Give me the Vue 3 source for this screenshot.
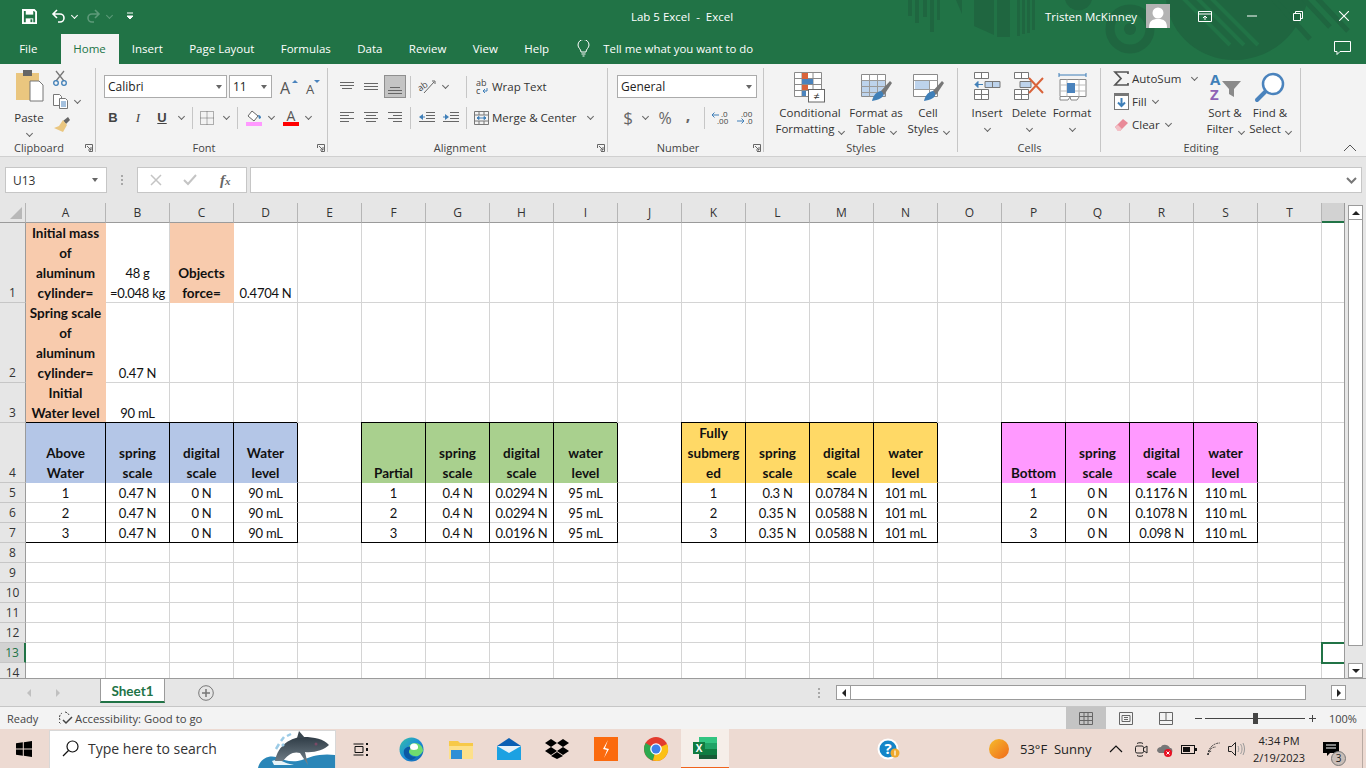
<template>
  <div class="app">
    <!-- Title bar -->
    <header class="titlebar">
      <svg class="title-art" width="500" height="64" viewBox="0 0 500 64">
        <g fill="#1f6640">
          <rect x="8" y="0" width="4" height="16" /><rect x="15" y="0" width="4" height="23" /><rect x="23" y="0" width="4" height="17" /><rect x="30" y="0" width="4" height="32" /><rect x="37" y="0" width="3" height="20" />
          <path d="M56 0h6v14zM74 0h20v35l-20-9zM97 0h13v37h-13zM117 0h3v36h-3zM122 0h3v34h-3zM127 0h3v33h-3zM132 0h3v30h-3z" />
          <path d="M165 0h27a14 14 0 0 1-27 0z" />
        </g>
        <circle cx="230" cy="29" r="20" fill="none" stroke="#1f6640" stroke-width="9" />
        <circle cx="230" cy="29" r="6" fill="#1f6640" />
        <path d="M266 0c4 38 38 62 72 60 28-2 58-18 70-60z" fill="#1f6640" />
        <g stroke="#217346" stroke-width="4"><path d="M280 -5l50 50M294 -5l50 50M308 -5l50 50" /></g>
        <g stroke="#1f6640" stroke-width="5"><path d="M400 -5l30 32M414 -5l34 36M370 -5l40 44" /></g>
      </svg>
      <div class="title-row">
        <div class="qat">
          <svg class="save" width="15" height="15" viewBox="0 0 16 16"><path d="M1 1h12l2 2v12H1z" fill="none" stroke="#fff" stroke-width="2" /><rect x="4" y="1" width="8" height="5" fill="#fff" /><rect x="4" y="10" width="8" height="5" fill="#fff" /><rect x="9" y="11" width="2" height="3" fill="#217346" /></svg>
          <svg class="undo" width="15" height="14" viewBox="0 0 15 14"><path d="M6 1L2 5l4 4M2 5h7a4 4 0 0 1 0 8H7" fill="none" stroke="#fff" stroke-width="1.6" /></svg>
          <span class="chev w"></span>
          <svg class="redo" width="15" height="14" viewBox="0 0 15 14"><path d="M9 1l4 4-4 4M13 5H6a4 4 0 0 0 0 8h2" fill="none" stroke="#5d9a79" stroke-width="1.6" /></svg>
          <span class="chev dim"></span>
          <svg class="custom" width="8" height="8" viewBox="0 0 8 8"><path d="M1 1h6M1 4h6l-3 3z" stroke="#fff" fill="#fff" /></svg>
        </div>
        <div class="doc-title">Lab 5 Excel&nbsp; -&nbsp; Excel</div>
        <div class="user">Tristen McKinney</div>
        <svg class="avatar" width="24" height="24" viewBox="0 0 24 24"><rect width="24" height="24" fill="#b3b3b3" /><circle cx="12" cy="9" r="5.5" fill="#fff" /><path d="M3 24c0-7 3-9 9-9s9 2 9 9z" fill="#fff" /></svg>
        <svg class="win-btn opts" width="14" height="11" viewBox="0 0 14 11"><path d="M.5.5h13v10H.5zM.5 3h13M7 9V5M5 7l2-2 2 2" fill="none" stroke="#fff" /></svg>
        <svg class="win-btn mini" width="10" height="2" viewBox="0 0 10 2"><path d="M0 1h10" stroke="#fff" /></svg>
        <svg class="win-btn rest" width="10" height="10" viewBox="0 0 10 10"><path d="M.5 2.500h7v7h-7zM2.500 2.500V.5h7v7h-2" fill="none" stroke="#fff" /></svg>
        <svg class="win-btn clos" width="10" height="10" viewBox="0 0 10 10"><path d="M0 0l10 10M10 0L0 10" stroke="#fff" stroke-width="1.1" /></svg>
      </div>
      <div class="tab-row">
        <span class="tab file">File</span>
        <span class="tab home">Home</span>
        <span v-for="t in tabs" :key="t" class="tab">{{ t }}</span>
        <svg class="bulb" width="13" height="17" viewBox="0 0 13 17"><path d="M4 12c0-3-3-4-3-7a5.500 5.500 0 0 1 11 0c0 3-3 4-3 7zM4.500 14h4M5.500 16h2" fill="none" stroke="#fff" /></svg>
        <span class="tell">Tell me what you want to do</span>
        <svg class="comment" width="17" height="15" viewBox="0 0 17 15"><path d="M.5.5h16v10H6l-3 3v-3H.5z" fill="none" stroke="#fff" /></svg>
      </div>
    </header>

    <!-- Ribbon -->
    <section class="ribbon">
      <div class="group g-clip">
        <div class="clip-body">
          <div class="big paste">
            <svg width="29" height="32" viewBox="0 0 29 32"><path d="M1 3h23v27H1z" fill="#eac67f" /><rect x="8" y="0" width="9" height="6" fill="#666" /><path d="M15 11h9l4 4v16H15z" fill="#fff" stroke="#777" /></svg>
            <span class="paste-label">Paste</span>
            <span class="chev"></span>
          </div>
          <div class="clip-tools">
            <svg width="14" height="16" viewBox="0 0 14 16"><path d="M3 1l8 10M11 1L3 11" stroke="#777" stroke-width="1.300" fill="none" /><circle cx="3" cy="13" r="2.300" fill="none" stroke="#3f7fb8" stroke-width="1.300" /><circle cx="11" cy="13" r="2.300" fill="none" stroke="#3f7fb8" stroke-width="1.300" /></svg>
            <div class="copy-row">
              <svg width="15" height="15" viewBox="0 0 15 15"><path d="M.5.5h6l2 2v9h-8z" fill="#fff" stroke="#777" /><path d="M6.500 4.500h6l2 2v8h-8z" fill="#fff" stroke="#777" /><path d="M8 8h5M8 10h5M8 12h5" stroke="#4a83bd" /></svg>
              <span class="chev"></span>
            </div>
            <svg width="17" height="15" viewBox="0 0 17 15"><path d="M10 4l5-4 2 3-4 4z" fill="#666" /><path d="M10 3l4 5-4 7-9-4 5-2z" fill="#eac67f" /></svg>
          </div>
        </div>
        <div class="g-label">Clipboard</div>
        <svg class="launch" width="8" height="8" viewBox="0 0 8 8"><path d="M.5 4V.5H7.500V7.500H4M2 2l4 4M3 6h3V3" fill="none" stroke="#666" /></svg>
      </div>

      <div class="group g-font">
        <div class="row r1">
          <div class="combo font-name"><span>Calibri</span><i class="caret"></i></div>
          <div class="combo font-size"><span>11</span><i class="caret"></i></div>
          <svg class="grow" width="18" height="16" viewBox="0 0 18 16"><text x="0" y="15" class="ic-a">A</text><path d="M12 4l3-3 3 3z" fill="#4a83bd" /></svg>
          <svg class="shrink" width="14" height="16" viewBox="0 0 14 16"><text x="0" y="15" class="ic-a sm">A</text><path d="M8 1h6l-3 3z" fill="#4a83bd" /></svg>
        </div>
        <div class="row r2">
          <span class="fmt bold-ic">B</span>
          <span class="fmt ital-ic">I</span>
          <span class="fmt und-ic">U</span>
          <span class="chev ml8"></span>
          <span class="sep sep-a"></span>
          <svg class="ml7" width="14" height="14" viewBox="0 0 14 14"><path d="M.5.5h13v13H.5zM7 .5v13M.5 7h13" fill="none" stroke="#666" stroke-dasharray="1 1" /></svg>
          <span class="chev ml10"></span>
          <span class="sep sep-a"></span>
          <div class="color-ic ml8">
            <svg width="16" height="12" viewBox="0 0 16 12"><path d="M6 1l6 5-4 5-6-5z" fill="#fff" stroke="#666" /><path d="M12 5c2 0 3 1 3 3l-2 1z" fill="#3f7fb8" /></svg>
            <i class="bar-pink"></i>
          </div>
          <span class="chev ml7"></span>
          <div class="color-ic ml9">
            <span class="a-red">A</span>
            <i class="bar-red"></i>
          </div>
          <span class="chev ml7"></span>
        </div>
        <div class="g-label with-launch">Font</div>
        <svg class="launch" width="8" height="8" viewBox="0 0 8 8"><path d="M.5 4V.5H7.500V7.500H4M2 2l4 4M3 6h3V3" fill="none" stroke="#666" /></svg>
      </div>

      <div class="group g-align">
        <div class="row r1">
          <svg class="al" width="14" height="9" viewBox="0 0 14 9"><path d="M0 .5h14M0 3.500h14M2 6.500h10" stroke="#666" /></svg>
          <svg class="al" width="14" height="8" viewBox="0 0 14 8"><path d="M0 .5h14M0 3.500h14M0 6.500h14" stroke="#666" /></svg>
          <div class="al-on"><svg width="14" height="9" viewBox="0 0 14 9"><path d="M2 1.500h10M0 4.500h14M0 7.500h14" stroke="#666" /></svg></div>
          <span class="sep sep-b"></span>
          <svg class="ml8" width="17" height="15" viewBox="0 0 17 15"><text x="0" y="10" class="ic-ab" transform="rotate(-35 5 10)">ab</text><path d="M5 14L15 3M13 2h3v3" stroke="#666" fill="none" /></svg>
          <span class="chev ml7"></span>
          <span class="sep sep-c"></span>
          <svg class="ml9" width="13" height="16" viewBox="0 0 13 16"><text x="0" y="7" class="ic-wr">ab</text><text x="0" y="15" class="ic-wr">c</text><path d="M7 12h4V9M7 12l2-2M7 12l2 2" fill="none" stroke="#3f7fb8" /></svg>
          <span class="lbl ml3">Wrap Text</span>
        </div>
        <div class="row r2">
          <svg class="al" width="14" height="11" viewBox="0 0 14 11"><path d="M0 .5h14M0 3.500h9M0 6.500h14M0 9.500h9" stroke="#666" /></svg>
          <svg class="al" width="14" height="11" viewBox="0 0 14 11"><path d="M0 .5h14M2 3.500h10M0 6.500h14M2 9.500h10" stroke="#666" /></svg>
          <svg class="al" width="14" height="11" viewBox="0 0 14 11"><path d="M0 .5h14M5 3.500h9M0 6.500h14M5 9.500h9" stroke="#666" /></svg>
          <span class="sep sep-d"></span>
          <svg class="ml8" width="16" height="12" viewBox="0 0 16 12"><path d="M7 .5h9M7 3.500h9M7 6.500h9M0 9.500h16" stroke="#666" /><path d="M0 5l4-3v6z" fill="#3f7fb8" /><path d="M2 5h4" stroke="#3f7fb8" /></svg>
          <svg class="ml8" width="16" height="12" viewBox="0 0 16 12"><path d="M7 .5h9M7 3.500h9M7 6.500h9M0 9.500h16" stroke="#666" /><path d="M6 5L2 2v6z" fill="#3f7fb8" /><path d="M0 5h3" stroke="#3f7fb8" /></svg>
          <span class="sep sep-e"></span>
          <svg class="ml7" width="15" height="14" viewBox="0 0 15 14"><path d="M.5.5h14v13H.5zM.5 4h14M.5 10h14M5 .5V4M10 .5V4M5 10v3.500M10 10v3.500" fill="none" stroke="#777" /><path d="M3 7h9M3 7l2-1.500v3zM12 7l-2-1.500v3z" stroke="#3f7fb8" fill="#3f7fb8" /></svg>
          <span class="lbl ml3">Merge &amp; Center</span>
          <span class="chev ml11"></span>
        </div>
        <div class="g-label with-launch">Alignment</div>
        <svg class="launch" width="8" height="8" viewBox="0 0 8 8"><path d="M.5 4V.5H7.500V7.500H4M2 2l4 4M3 6h3V3" fill="none" stroke="#666" /></svg>
      </div>

      <div class="group g-num">
        <div class="row r1"><div class="combo num-fmt"><span>General</span><i class="caret"></i></div></div>
        <div class="row r2">
          <span class="num-ic dollar">$</span>
          <span class="chev ml10"></span>
          <span class="num-ic pct">%</span>
          <span class="num-ic comma">,</span>
          <span class="sep sep-f"></span>
          <svg class="ml7" width="18" height="13" viewBox="0 0 18 13"><text x="9" y="6" class="ic-dec">.0</text><text x="5" y="13" class="ic-dec">.00</text><path d="M0 4h7M0 4l2.500-2.500M0 4l2.500 2.500" stroke="#3f7fb8" fill="none" /></svg>
          <svg class="ml7" width="18" height="13" viewBox="0 0 18 13"><text x="4" y="6" class="ic-dec">.00</text><text x="9" y="13" class="ic-dec">.0</text><path d="M0 10h7M7 10L4.500 7.500M7 10l-2.500 2.500" stroke="#3f7fb8" fill="none" /></svg>
        </div>
        <div class="g-label with-launch">Number</div>
        <svg class="launch" width="8" height="8" viewBox="0 0 8 8"><path d="M.5 4V.5H7.500V7.500H4M2 2l4 4M3 6h3V3" fill="none" stroke="#666" /></svg>
      </div>

      <div class="group g-styles">
        <div class="bigs">
          <div class="big st1">
            <svg width="32" height="31" viewBox="0 0 32 31"><path d="M.5.5h27v24H.5zM.5 6.500h27M.5 12.500h27M.5 18.500h27M8 .5v24M19 .5v24" fill="#fff" stroke="#8a8a8a" /><path d="M8 1h6v6H8zM8 13h6v5H8z" fill="#d9633a" /><path d="M8 7h11v5H8zM8 19h4v5H8z" fill="#4a83bd" /><rect x="14.500" y="17.500" width="16" height="12.500" fill="#fff" stroke="#666" /><text x="22.500" y="28" text-anchor="middle" class="ic-ne">≠</text></svg>
            <span class="txt">Conditional<br />Formatting <i class="chev in"></i></span>
          </div>
          <div class="big st2">
            <svg width="31" height="31" viewBox="0 0 31 31"><path d="M.5 2.500h24v22H.5z" fill="#fff" stroke="#8a8a8a" /><rect x="1" y="8" width="23" height="16" fill="#bdd3ec" /><path d="M.5 8.500h24M.5 14.500h24M.5 20.500h24M8.500 2.500v22M16.500 2.500v22" stroke="#9a9a9a" fill="none" /><path d="M19 20L29 9l2 2-8 12z" fill="#777" /><path d="M20 19c3 2 3 5 0 7-3 2-6 2-9 3 1-4 3-9 9-10z" fill="#3f7fb8" /></svg>
            <span class="txt">Format as<br />Table <i class="chev in"></i></span>
          </div>
          <div class="big st3">
            <svg width="31" height="31" viewBox="0 0 31 31"><path d="M.5 2.500h24v22H.5z" fill="#fff" stroke="#8a8a8a" /><rect x="2" y="8" width="14" height="9" fill="#bdd3ec" /><path d="M.5 8.500h24M.5 17.500h24M16.500 8.500v16" stroke="#9a9a9a" fill="none" /><path d="M19 20L29 9l2 2-8 12z" fill="#777" /><path d="M20 19c3 2 3 5 0 7-3 2-6 2-9 3 1-4 3-9 9-10z" fill="#3f7fb8" /></svg>
            <span class="txt">Cell<br />Styles <i class="chev in"></i></span>
          </div>
        </div>
        <div class="g-label">Styles</div>
      </div>

      <div class="group g-cells">
        <div class="bigs">
          <div class="big ce1">
            <svg class="h28" width="27" height="28" viewBox="0 0 27 28"><g fill="#fff" stroke="#777"><path d="M.5.500h14v6H.5zM7.500.5v6M.5 17.500h14v10H.5zM7.500 17.500v10M.5 22.500h14" /></g><path d="M11 9.500h15v6H11zM18.500 9.500v6" fill="#bdd3ec" stroke="#777" /><path d="M1 12.500h8M1 12.500l3-3v6z" stroke="#3f7fb8" fill="#3f7fb8" /></svg>
            <span class="txt">Insert</span><i class="chev"></i>
          </div>
          <div class="big ce2">
            <svg class="h28" width="30" height="28" viewBox="0 0 30 28"><g fill="#fff" stroke="#777"><path d="M.5.500h14v6H.5zM7.500.5v6M.5 17.500h14v10H.5zM7.500 17.500v10M.5 22.500h14" /></g><path d="M6 9.500h11v6H6z" fill="#bdd3ec" stroke="#777" /><path d="M15 6l14 15M29 6L15 21" stroke="#d9633a" stroke-width="2" /></svg>
            <span class="txt">Delete</span><i class="chev"></i>
          </div>
          <div class="big ce3">
            <svg class="h30" width="29" height="30" viewBox="0 0 29 30"><path d="M1 3h27M1 1v4M28 1v4" stroke="#3f7fb8" fill="none" /><path d="M2 7.500h26v17H2z" fill="#fff" stroke="#888" /><path d="M9 7.500v17M21 7.500v17M2 13h26M2 19h26" stroke="#bbb" /><rect x="9" y="11" width="8" height="10" fill="#4a83bd" /><path d="M2 25v3h8l2-3M12 25l1 3h6l2-3" fill="#fff" stroke="#888" /></svg>
            <span class="txt">Format</span><i class="chev"></i>
          </div>
        </div>
        <div class="g-label">Cells</div>
      </div>

      <div class="group g-edit">
        <div class="edit-body">
          <div class="edit-col">
            <div class="edit-row">
              <svg width="15" height="15" viewBox="0 0 15 15"><path d="M14 3V1H1l6 6.500L1 14h13v-2" fill="none" stroke="#555" stroke-width="1.700" /></svg>
              <span class="lbl">AutoSum</span><i class="chev ml8"></i>
            </div>
            <div class="edit-row">
              <svg width="15" height="17" viewBox="0 0 15 17"><rect x=".5" y=".5" width="14" height="16" fill="#fff" stroke="#777" /><rect x="0" y="0" width="15" height="3" fill="#777" /><path d="M7.500 5v8M4 9.500l3.500 3.500 3.500-3.500" stroke="#3f7fb8" stroke-width="2" fill="none" /></svg>
              <span class="lbl">Fill</span><i class="chev ml3"></i>
            </div>
            <div class="edit-row">
              <svg width="15" height="14" viewBox="0 0 15 14"><path d="M1 9l8-8 5 4-8 8H4z" fill="#e98a98" /><path d="M1 9l3 4h2l2-2-4-4z" fill="#f3c0c6" /></svg>
              <span class="lbl">Clear</span><i class="chev ml3"></i>
            </div>
          </div>
          <div class="big so1">
            <svg width="32" height="31" viewBox="0 0 32 31"><text x="1" y="13" class="ic-az az-b">A</text><text x="1" y="28" class="ic-az az-p">Z</text><path d="M13 9h19l-7 8v8l-5-3v-5z" fill="#8a8a8a" /></svg>
            <span class="txt">Sort &amp;<br />Filter <i class="chev in"></i></span>
          </div>
          <div class="big so2">
            <svg width="30" height="31" viewBox="0 0 30 31"><circle cx="18" cy="12" r="10" fill="#fff" stroke="#4a83bd" stroke-width="2.500" /><path d="M10 20L2 28" stroke="#4a83bd" stroke-width="4" stroke-linecap="round" /></svg>
            <span class="txt">Find &amp;<br />Select <i class="chev in"></i></span>
          </div>
        </div>
        <div class="g-label">Editing</div>
      </div>

      <div class="collapse-wrap">
        <svg width="14" height="8" viewBox="0 0 14 8"><path d="M1 7l6-6 6 6" fill="none" stroke="#555" /></svg>
      </div>
    </section>

    <!-- Formula bar -->
    <section class="formula">
      <div class="name-box"><span>U13</span><i class="caret"></i></div>
      <span class="dots"><i></i><i></i><i></i></span>
      <div class="fx-box">
        <svg width="12" height="12" viewBox="0 0 12 12"><path d="M1 1l10 10M11 1L1 11" stroke="#c4c4c4" stroke-width="1.500" /></svg>
        <svg width="14" height="12" viewBox="0 0 14 12"><path d="M1 6l4 4 8-9" fill="none" stroke="#c4c4c4" stroke-width="2" /></svg>
        <span class="fx">f<span class="fx-x">x</span></span>
      </div>
      <div class="fx-input"><svg width="11" height="7" viewBox="0 0 11 7"><path d="M1 1l4.500 4.500L10 1" fill="none" stroke="#777" stroke-width="2" /></svg></div>
    </section>

    <!-- Sheet -->
    <section class="sheet-area">
      <div class="grid">
        <div v-for="c in cells" :key="c.key" class="cell" :class="c.cls"><span class="ct">{{ c.text }}</span></div>
      </div>
      <div class="vscroll">
        <div class="sb-btn"><i class="tri up"></i></div>
        <div class="sb-track"><div class="sb-thumb"></div></div>
        <div class="sb-btn"><i class="tri down"></i></div>
      </div>
    </section>

    <!-- Sheet tabs -->
    <section class="tabs-bar">
      <i class="nav-tri left"></i>
      <i class="nav-tri right"></i>
      <div class="sheet-tab">Sheet1</div>
      <svg class="add" width="16" height="16" viewBox="0 0 16 16"><circle cx="8" cy="8" r="7.300" fill="none" stroke="#777" /><path d="M4 8h8M8 4v8" stroke="#777" stroke-width="1.500" /></svg>
      <span class="dots tabs-dots"><i></i><i></i><i></i></span>
      <div class="hscroll">
        <div class="sb-btn h"><i class="tri lft"></i></div>
        <div class="h-thumb"></div>
        <div class="h-rest"></div>
        <div class="sb-btn h"><i class="tri rgt"></i></div>
      </div>
    </section>

    <!-- Status bar -->
    <footer class="status">
      <span class="ready">Ready</span>
      <svg class="acc" width="17" height="15" viewBox="0 0 17 15"><path d="M3 9a5.500 5.500 0 0 1 2-7M8 1a5.500 5.500 0 0 1 4 3M2 11l2 2" fill="none" stroke="#444" stroke-dasharray="2 1" /><path d="M6 9l3 3 6-6" fill="none" stroke="#444" stroke-width="1.500" /></svg>
      <span class="acc-text">Accessibility: Good to go</span>
      <div class="view-btn on"><svg width="14" height="13" viewBox="0 0 14 13"><path d="M.5.5h13v12H.5zM.5 4.500h13M.5 8.500h13M5 .5v12M9 .5v12" fill="none" stroke="#666" /></svg></div>
      <div class="view-btn"><svg width="14" height="13" viewBox="0 0 14 13"><path d="M.5.5h13v12H.5z" fill="none" stroke="#666" /><path d="M3 3.500h8v6H3zM5 5.500h4M5 7.500h4" fill="none" stroke="#666" /></svg></div>
      <div class="view-btn"><svg width="14" height="13" viewBox="0 0 14 13"><path d="M.5.5h13v12H.5zM.5 8.500h13M7 .5v8" fill="none" stroke="#666" /></svg></div>
      <span class="zm minus"></span>
      <div class="slider"><i></i></div>
      <span class="zm plus"></span>
      <span class="zoom-val">100%</span>
    </footer>

    <!-- Taskbar -->
    <footer class="taskbar">
      <svg class="start" width="16" height="16" viewBox="0 0 16 16"><path d="M0 2.300l6.800-1v6.200H0zM7.800 1.200L16 0v7.500H7.800zM0 8.500h6.800v6.200l-6.800-1zM7.800 8.500H16V16l-8.200-1.200z" fill="#000" /></svg>
      <div class="search">
        <svg width="17" height="17" viewBox="0 0 17 17"><circle cx="10.500" cy="6.500" r="5.500" fill="none" stroke="#111" stroke-width="1.200" /><path d="M6.500 10.500L1 16" stroke="#111" stroke-width="1.300" /></svg>
        <span>Type here to search</span>
        <svg class="whale" width="77" height="39" viewBox="0 0 77 39">
          <defs><linearGradient id="wh" x1="0" y1="0" x2="0" y2="1"><stop offset="0" stop-color="#2f3c46" /><stop offset="1" stop-color="#77858f" /></linearGradient></defs>
          <path d="M0 39C2 30 10 26 18 28c8 3 16 6 26 3 8-3 18-7 33-5v13z" fill="#2a86b8" />
          <path d="M14 32c4-2 8-1 12 1s8 2 10 3H16z" fill="#e8f4f8" />
          <path d="M17 32c3-16 16-24 29-24 10 0 20 2 25 8-5 5-15 8-24 7l3 13-8-12c-6-2-12 1-17 8z" fill="url(#wh)" />
          <path d="M39 9l2-7 6 7z" fill="#39464f" />
          <circle cx="58" cy="15" r="1.500" fill="#7a4a66" />
          <path d="M18 20l3-5M23 12l3-4M29 7l4-2M24 17l2-2" stroke="#9ccbe6" stroke-width="2.500" />
        </svg>
      </div>
      <svg class="tv" width="16" height="15" viewBox="0 0 16 15"><path d="M.5 2h10M.5 13h10M2 4.500h8v6H2z" fill="none" stroke="#111" /><path d="M14 1v2M14 6v3M14 12v2" stroke="#111" stroke-width="2" /></svg>
      <svg class="tb edge" width="25" height="25" viewBox="0 0 25 25">
        <defs><linearGradient id="ed" x1="0" y1="0" x2="1" y2="1"><stop offset="0" stop-color="#35c1a5" /><stop offset=".5" stop-color="#1d8ed8" /><stop offset="1" stop-color="#0f5fae" /></linearGradient></defs>
        <circle cx="12.500" cy="12.500" r="12" fill="url(#ed)" />
        <path d="M24 14c0-5-4-8-8-8s-7 3-7 6c0 5 5 8 10 7 2-1 4-3 5-5z" fill="#6fdc6f" />
        <path d="M14 11c-3 0-4 2-4 4 0 3 3 5 7 5-1 1-3 3-5 3-6-1-8-6-7-10 2-3 6-5 9-2z" fill="#0c59a4" />
        <path d="M11 10a4 4 0 0 1 8 1c0 1-2 2-4 2-3 0-4-1-4-3z" fill="#fff" />
      </svg>
      <svg class="tb folder" width="24" height="20" viewBox="0 0 24 20"><path d="M0 2h9l2 2h13v16H0z" fill="#f7c948" /><rect x="0" y="7" width="24" height="13" fill="#fde08a" /><rect x="2" y="11" width="11" height="9" fill="#2f8fd6" /></svg>
      <svg class="tb mail" width="24" height="22" viewBox="0 0 24 22"><path d="M0 8l12-8 12 8z" fill="#0a5fb3" /><rect y="8" width="24" height="14" fill="#1ba1e2" /><path d="M0 8h24l-12 7z" fill="#e8f1f8" /></svg>
      <svg class="tb drop" width="24" height="20" viewBox="0 0 24 20"><path d="M6 0l6 4-6 4-6-4zM18 0l6 4-6 4-6-4zM6 8l6 4-6 4-6-4zM18 8l6 4-6 4-6-4zM12 13l6 4-6 3-6-3z" fill="#000" /></svg>
      <svg class="tb orange" width="24" height="24" viewBox="0 0 24 24"><rect width="24" height="24" fill="#fb6a0e" /><path d="M14 3l-5 9 4 1-3 8 5-9-4-1z" fill="#fff" /></svg>
      <svg class="tb chrome" width="24" height="24" viewBox="0 0 24 24">
        <circle cx="12" cy="12" r="12" fill="#e33b2e" />
        <path d="M12 12L1.600 6A12 12 0 0 0 9 23.600z" fill="#2da94f" />
        <path d="M12 12l11-5a12 12 0 0 1-14 16.600z" fill="#fbc116" />
        <circle cx="12" cy="12" r="5.800" fill="#fff" /><circle cx="12" cy="12" r="4.500" fill="#3f80ea" />
      </svg>
      <div class="tb-active">
        <svg width="24" height="22" viewBox="0 0 24 22">
          <rect x="6" y="0" width="18" height="6" fill="#33c481" /><rect x="6" y="6" width="18" height="6" fill="#21a366" /><rect x="6" y="12" width="18" height="6" fill="#107c41" /><rect x="6" y="18" width="18" height="4" fill="#185c37" />
          <rect x="0" y="5" width="12" height="12" fill="#107c41" /><text x="6" y="15" text-anchor="middle" class="ic-x">X</text>
        </svg>
      </div>
      <svg class="help" width="24" height="22" viewBox="0 0 24 22"><circle cx="11" cy="11" r="10.500" fill="#fff" /><circle cx="11" cy="11" r="8.500" fill="#1385c8" /><text x="11" y="16" text-anchor="middle" class="ic-q">?</text><circle cx="18" cy="15" r="4.500" fill="#efa92c" /><path d="M18 12.500v5" stroke="#fff" stroke-width="1.200" /></svg>
      <svg class="sun" width="20" height="20" viewBox="0 0 20 20"><defs><linearGradient id="su" x1="0" y1="0" x2="1" y2="1"><stop offset="0" stop-color="#f6bc2d" /><stop offset="1" stop-color="#f0691a" /></linearGradient></defs><circle cx="10" cy="10" r="10" fill="url(#su)" /></svg>
      <span class="weather">53°F&nbsp; Sunny</span>
      <svg class="tray t-car" width="14" height="8" viewBox="0 0 14 8"><path d="M1 7l6-6 6 6" fill="none" stroke="#111" stroke-width="1.200" /></svg>
      <svg class="tray t-meet" width="13" height="17" viewBox="0 0 13 17"><path d="M2 2.500c1-1 5-1 6 0M2 14.500c1 1 5 1 6 0" fill="none" stroke="#222" /><rect x=".5" y="5" width="8" height="7" rx="1.500" fill="none" stroke="#222" /><path d="M9 7l3-2v7l-3-2" fill="none" stroke="#222" /></svg>
      <svg class="tray t-cloud" width="17" height="15" viewBox="0 0 17 15"><path d="M1 9c0-3 2-4 4-4 1-3 7-3 9 1 2 0 3 2 2 5H3z" fill="#777" /><circle cx="12" cy="11" r="4" fill="#e81123" /><path d="M10.500 9.500l3 3M13.500 9.500l-3 3" stroke="#fff" /></svg>
      <svg class="tray t-bat" width="16" height="9" viewBox="0 0 16 9"><rect x=".5" y=".5" width="13" height="8" fill="none" stroke="#111" /><rect x="2" y="2" width="7" height="5" fill="#111" /><rect x="14" y="3" width="2" height="3" fill="#111" /></svg>
      <svg class="tray t-wifi" width="14" height="14" viewBox="0 0 14 14"><path d="M1 13a12 12 0 0 1 12-12M1 13a8 8 0 0 1 8-8M1 13a4 4 0 0 1 4-4" fill="none" stroke="#333" stroke-dasharray="2 1" /></svg>
      <svg class="tray t-vol" width="17" height="14" viewBox="0 0 17 14"><path d="M.5 4.500h3l4-4v13l-4-4h-3z" fill="none" stroke="#222" /><path d="M10 4c1 2 1 4 0 6M12.500 2c2 3 2 7 0 10M15 1c2 4 2 8 0 12" fill="none" stroke="#999" /></svg>
      <div class="clock"><span>4:34 PM</span><span>2/19/2023</span></div>
      <div class="notif">
        <svg width="16" height="15" viewBox="0 0 16 15"><path d="M0 0h16v11H7l-3 3v-3H0z" fill="#000" /><path d="M3 3h10M3 6h10" stroke="#fff" /></svg>
        <span class="badge">3</span>
      </div>
      <i class="desk-edge"></i>
    </footer>
  </div>
</template>

<script setup>
import { computed } from 'vue'

const tabs = ['Insert', 'Page Layout', 'Formulas', 'Data', 'Review', 'View', 'Help']

const colNames = 'ABCDEFGHIJKLMNOPQRSTU'.split('')
const rowNums = Array.from({ length: 14 }, (_, i) => i + 1)

// cell contents by address
const data = {
  A1: { t: 'Initial mass\nof\naluminum\ncylinder=', c: 'peach b' },
  B1: { t: '48 g\n=0.048 kg' },
  C1: { t: 'Objects\nforce=', c: 'peach b' },
  D1: { t: '0.4704 N' },
  A2: { t: 'Spring scale\nof\naluminum\ncylinder=', c: 'peach b' },
  B2: { t: '0.47 N' },
  A3: { t: 'Initial\nWater level', c: 'peach b' },
  B3: { t: '90 mL' },
}

// the four measurement tables
const addTable = (start, fill, head, rows) => {
  const first = colNames.indexOf(start)
  head.forEach((text, i) => {
    const edge = first + i === 0 ? ' first' : ''
    data[colNames[first + i] + 4] = { t: text, c: `${fill} b box top${edge}` }
    rows.forEach((row, r) => {
      const last = r === rows.length - 1 ? ' bottom' : ''
      data[colNames[first + i] + (5 + r)] = { t: row[i], c: `box${last}${edge}` }
    })
  })
}

addTable('A', 'blue', ['Above\nWater', 'spring\nscale', 'digital\nscale', 'Water\nlevel'], [
  ['1', '0.47 N', '0 N', '90 mL'],
  ['2', '0.47 N', '0 N', '90 mL'],
  ['3', '0.47 N', '0 N', '90 mL'],
])
addTable('F', 'green', ['Partial', 'spring\nscale', 'digital\nscale', 'water\nlevel'], [
  ['1', '0.4 N', '0.0294 N', '95 mL'],
  ['2', '0.4 N', '0.0294 N', '95 mL'],
  ['3', '0.4 N', '0.0196 N', '95 mL'],
])
addTable('K', 'yellow', ['Fully\nsubmerg\ned', 'spring\nscale', 'digital\nscale', 'water\nlevel'], [
  ['1', '0.3 N', '0.0784 N', '101 mL'],
  ['2', '0.35 N', '0.0588 N', '101 mL'],
  ['3', '0.35 N', '0.0588 N', '101 mL'],
])
addTable('P', 'pink', ['Bottom', 'spring\nscale', 'digital\nscale', 'water\nlevel'], [
  ['1', '0 N', '0.1176 N', '110 mL'],
  ['2', '0 N', '0.1078 N', '110 mL'],
  ['3', '0 N', '0.098 N', '110 mL'],
])

// flat list for the css grid
const cells = computed(() => {
  const list = [{ key: 'corner', text: '', cls: 'corner' }]
  colNames.forEach((c) => {
    // column U is too narrow on screen, its letter does not show
    list.push({ key: c, text: c === 'U' ? '' : c, cls: c === 'U' ? 'col-head cur-col' : 'col-head' })
  })
  rowNums.forEach((n) => {
    list.push({ key: 'r' + n, text: String(n), cls: n === 13 ? 'row-head cur-row' : 'row-head' })
    colNames.forEach((c) => {
      const addr = c + n
      const d = data[addr] || { t: '' }
      list.push({ key: addr, text: d.t, cls: (d.c || '') + (addr === 'U13' ? ' picked' : '') })
    })
  })
  return list
})
</script>

<style scoped>
.app {
  width: 1366px;
  height: 768px;
  overflow: hidden;
  background: #e6e6e6;
  font-family: "Open Sans", "Noto Sans", sans-serif;
  font-size: 11.5px;
  color: #333;
  display: flex;
  flex-direction: column;
}
.ribbon svg, .taskbar svg { overflow: visible; }

/* title bar */
.titlebar {
  height: 64px;
  background: #217346;
  color: #fff;
  position: relative;
  flex: none;
}
.title-art {
  position: absolute;
  left: 900px;
  top: 0;
}
.title-row {
  height: 32px;
  display: flex;
  align-items: center;
  position: relative;
}
.qat {
  width: 500px;
  display: flex;
  align-items: center;
  padding-left: 22px;
  box-sizing: border-box;
}
.undo { margin-left: 14px; }
.qat .chev { margin: 0 0 2px 6px; }
.redo { margin-left: 9px; }
.custom { margin-left: 14px; }
.doc-title {
  width: 364px;
  text-align: center;
  font-size: 11.5px;
  white-space: nowrap;
}
.user {
  margin-left: 181px;
  width: 101px;
  font-size: 11.5px;
  white-space: nowrap;
}
.avatar { margin-right: 28px; }
.win-btn { flex: none; }
.mini { margin-left: 35px; }
.rest { margin-left: 36px; }
.clos { margin-left: 36px; }
.tab-row {
  height: 32px;
  display: flex;
  align-items: center;
  position: relative;
}
.tab {
  padding: 0 13.2px;
  font-size: 11.5px;
  white-space: nowrap;
}
.tab.file { margin-left: 6px; margin-right: 10px; }
.tab.home {
  background: #f3f3f3;
  color: #217346;
  height: 30px;
  margin-top: 2px;
  line-height: 30px;
  width: 58px;
  padding: 0;
  text-align: center;
  margin-right: 0;
}
.bulb { margin-left: 15px; }
.tell { margin-left: 13px; white-space: nowrap; font-size: 11.4px; }
.comment { margin-left: auto; margin-right: 15px; }

/* ribbon */
.ribbon {
  height: 92px;
  flex: none;
  background: #f3f3f3;
  border-bottom: 1px solid #d0d0d0;
  display: flex;
  position: relative;
}
.group {
  position: relative;
  height: 92px;
  box-sizing: border-box;
  flex: none;
}
.group::after {
  content: "";
  position: absolute;
  right: 0;
  top: 4px;
  bottom: 4px;
  width: 1px;
  background: #c6c6c6;
}
.g-clip { width: 96px; }
.g-font { width: 232px; padding-left: 8px; }
.g-align { width: 280px; padding-left: 12px; }
.g-num { width: 156px; padding-left: 9px; }
.g-styles { width: 194px; }
.g-cells { width: 143px; }
.g-edit { width: 200px; }
.g-label {
  position: absolute;
  left: 0;
  right: 0;
  top: 76px;
  text-align: center;
  font-size: 11px;
  line-height: 16px;
  color: #444;
}
.g-label.with-launch { right: 16px; }
.g-clip .g-label { text-align: left; padding-left: 14px; }
.launch {
  position: absolute;
  right: 3px;
  top: 80px;
}
.row {
  display: flex;
  align-items: center;
  height: 23px;
}
.r1 { margin-top: 11px; }
.r2 { margin-top: 8px; }
.combo {
  background: #fff;
  border: 1px solid #ababab;
  height: 23px;
  box-sizing: border-box;
  display: flex;
  align-items: center;
  justify-content: space-between;
  padding: 0 4px 0 3px;
  font-size: 12px;
  color: #222;
  flex: none;
}
.caret {
  width: 0;
  height: 0;
  border-left: 3.5px solid transparent;
  border-right: 3.5px solid transparent;
  border-top: 4px solid #666;
}
.font-name { width: 123px; }
.font-size { width: 43px; margin-left: 2px; }
.num-fmt { width: 140px; }
.grow { margin-left: 8px; }
.shrink { margin-left: 8px; }
.ic-a { font: 16px "Open Sans", sans-serif; fill: #555; }
.ic-a.sm { font-size: 13px; }
.fmt {
  width: 18px;
  text-align: center;
  font-size: 13px;
  color: #444;
  font-family: "Liberation Sans", sans-serif;
}
.bold-ic { font-weight: 700; }
.ital-ic { font-style: italic; font-family: "Liberation Serif", serif; margin-left: 7px; }
.und-ic { text-decoration: underline; font-weight: 700; margin-left: 6px; }
.chev {
  display: inline-block;
  flex: none;
  width: 4px;
  height: 4px;
  border-right: 1px solid #666;
  border-bottom: 1px solid #666;
  transform: rotate(45deg);
  margin-bottom: 2px;
}
.chev.w { border-color: #fff; }
.chev.dim { border-color: #5d9a79; }
.chev.in { margin: 0 0 2px 2px; vertical-align: middle; }
.sep {
  width: 1px;
  height: 22px;
  background: #c6c6c6;
  flex: none;
}
.sep-a { margin-left: 8px; }
.sep-b { margin-left: 4px; }
.sep-c { margin-left: 18px; }
.sep-d { margin-left: -2px; }
.sep-e { margin-left: 7px; }
.sep-f { margin-left: 13px; }
.ml3 { margin-left: 3px; }
.ml7 { margin-left: 7px; }
.ml8 { margin-left: 8px; }
.ml9 { margin-left: 9px; }
.ml10 { margin-left: 10px; }
.ml11 { margin-left: 11px; }
.color-ic {
  width: 16px;
  display: flex;
  flex-direction: column;
  align-items: center;
  flex: none;
}
.bar-pink, .bar-red {
  display: block;
  width: 16px;
  height: 4px;
}
.bar-pink { background: #ff99ff; }
.bar-red { background: #ff0000; }
.a-red {
  font-size: 14px;
  line-height: 12px;
  color: #555;
}
.al { margin-right: 10px; flex: none; }
.al-on {
  width: 22px;
  height: 23px;
  margin-left: -4px;
  box-sizing: border-box;
  background: #c4c4c4;
  border: 1px solid #8f8f8f;
  display: flex;
  align-items: flex-end;
  justify-content: center;
  padding-bottom: 2px;
  flex: none;
}
.ic-ab { font: 9px "Open Sans", sans-serif; fill: #444; }
.ic-wr { font: 9px "Open Sans", sans-serif; fill: #444; }
.lbl { white-space: nowrap; color: #333; }
.num-ic {
  color: #666;
  flex: none;
  text-align: center;
}
.dollar { font-size: 17px; margin-left: 6px; width: 10px; }
.pct { font-size: 16px; margin-left: 9px; width: 16px; }
.comma { font-size: 16px; font-weight: 700; margin-left: 12px; width: 6px; margin-top: -6px; }
.ic-dec { font: 8px "Open Sans", sans-serif; fill: #444; }
.bigs {
  display: flex;
  height: 76px;
  position: relative;
}
.big {
  display: flex;
  flex-direction: column;
  align-items: center;
  flex: none;
  padding-top: 8px;
  box-sizing: border-box;
}
.txt {
  display: block;
  text-align: center;
  line-height: 16px;
  white-space: nowrap;
  margin-top: 2px;
}
.big .chev { margin-top: 5px; }
.h28 { margin-bottom: 3px; }
.h30 { margin-bottom: 1px; }
.st1 { width: 78px; margin-left: 7px; }
.st2 { width: 54px; }
.st3 { width: 50px; }
.ic-ne { font: 11px "Open Sans", sans-serif; fill: #333; }
.ce1 { width: 42px; margin-left: 8px; }
.ce2 { width: 42px; }
.ce3 { width: 44px; }
.edit-body { display: flex; height: 76px; }
.edit-col {
  width: 102px;
  padding: 5px 0 0 13px;
  box-sizing: border-box;
  display: flex;
  flex-direction: column;
  gap: 4px;
}
.edit-row {
  display: flex;
  align-items: center;
  height: 19px;
  gap: 3px;
}
.so1 { width: 44px; }
.so2 { width: 46px; }
.ic-az { font: 700 15px "Open Sans", sans-serif; }
.az-b { fill: #3f7fb8; }
.az-p { fill: #8f62b5; }
.collapse-wrap {
  flex: 1;
  display: flex;
  justify-content: flex-end;
  align-items: flex-end;
  padding: 0 9px 4px 0;
}
.paste-label { margin-top: 8px; line-height: 16px; }
.paste { width: 58px; padding-top: 6px; }
.paste .chev { margin-top: 5px; }
.clip-body { display: flex; }
.clip-tools {
  display: flex;
  flex-direction: column;
  gap: 8px;
  padding-top: 6px;
  margin-left: -5px;
  align-items: flex-start;
}
.copy-row { display: flex; align-items: center; gap: 7px; }

/* formula bar */
.formula {
  height: 26px;
  margin-top: 10px;
  display: flex;
  align-items: stretch;
  padding-left: 5px;
  flex: none;
}
.name-box {
  width: 102px;
  box-sizing: border-box;
  background: #fff;
  border: 1px solid #c6c6c6;
  display: flex;
  align-items: center;
  justify-content: space-between;
  padding: 0 8px 0 7px;
  font-size: 12px;
}
.dots {
  display: flex;
  flex-direction: column;
  justify-content: center;
  gap: 2px;
  width: 30px;
  align-items: center;
}
.dots i {
  width: 2px;
  height: 2px;
  background: #a8a8a8;
}
.fx-box {
  width: 110px;
  box-sizing: border-box;
  background: #fff;
  border: 1px solid #c6c6c6;
  display: flex;
  align-items: center;
  gap: 21px;
  padding-left: 12px;
}
.fx {
  font-family: "Liberation Serif", serif;
  font-style: italic;
  font-size: 15px;
  color: #666;
  font-weight: 700;
  margin-left: 2px;
}
.fx-x { font-size: 11px; }
.fx-input {
  width: 1112px;
  margin-left: 3px;
  box-sizing: border-box;
  background: #fff;
  border: 1px solid #c6c6c6;
  display: flex;
  align-items: center;
  justify-content: flex-end;
  padding-right: 4px;
}

/* sheet */
.sheet-area {
  height: 475px;
  margin-top: 10px;
  display: flex;
  flex: none;
  border-bottom: 1px solid #9b9b9b;
  box-sizing: content-box;
}
.grid {
  width: 1345px;
  height: 475px;
  overflow: hidden;
  flex: none;
  display: grid;
  grid-template-columns: 26px 80px repeat(19, 64px) 23px;
  grid-template-rows: 20px 80px 80px 40px 60px repeat(10, 20px);
  background: #fff;
  font-family: Lato, "Open Sans", sans-serif;
  font-size: 13px;
  letter-spacing: -0.25px;
  color: #111;
  border-right: 1px solid #9b9b9b;
  box-sizing: border-box;
}
.cell {
  box-sizing: border-box;
  border-right: 1px solid #d4d4d4;
  border-bottom: 1px solid #d4d4d4;
  display: flex;
  align-items: flex-end;
  justify-content: center;
  text-align: center;
  white-space: pre-line;
  line-height: 20px;
  overflow: hidden;
  min-width: 0;
  position: relative;
}
.ct { margin-bottom: -1px; }
.corner {
  background: #e6e6e6;
  border-right: 1px solid #b5b5b5;
  border-bottom: 1px solid #9b9b9b;
}
.corner::after {
  content: "";
  position: absolute;
  right: 3px;
  bottom: 3px;
  border-left: 12px solid transparent;
  border-bottom: 12px solid #b8b8b8;
}
.col-head {
  background: #e6e6e6;
  border-right: 1px solid #b5b5b5;
  border-bottom: 1px solid #9b9b9b;
  color: #333;
  font-family: "Open Sans", sans-serif;
  font-size: 12px;
  letter-spacing: 0;
  align-items: center;
}
.col-head .ct { margin-bottom: 0; }
.cur-col {
  background: #d2d2d2;
  border-bottom: 2px solid #217346;
  border-right: none;
}
.row-head {
  background: #e6e6e6;
  border-right: 1px solid #9b9b9b;
  border-bottom: 1px solid #c6c6c6;
  color: #333;
  font-family: "Open Sans", sans-serif;
  font-size: 12px;
  letter-spacing: 0;
}
.cur-row {
  background: #d2d2d2;
  color: #217346;
  border-right: 2px solid #217346;
}
.b { font-weight: 700; font-size: 13.5px; letter-spacing: 0; }
.peach { background: #f8cbad; border-color: transparent; }
.blue { background: #b4c6e7; border-color: transparent; }
.green { background: #a9d08e; border-color: transparent; }
.yellow { background: #ffd966; border-color: transparent; }
.pink { background: #ff99ff; border-color: transparent; }
.box {
  border-right-color: #000;
  overflow: visible;
  box-shadow: -1px 0 0 #000;
}
.top { box-shadow: -1px 0 0 #000, -1px -1px 0 #000; }
.bottom { border-bottom-color: #000; }
.first { box-shadow: none; }
.top.first { box-shadow: 0 -1px 0 #000; }
.picked {
  outline: 2px solid #217346;
  outline-offset: -1px;
  z-index: 2;
  overflow: visible;
}
.vscroll {
  width: 21px;
  flex: none;
  box-sizing: border-box;
  padding: 2px 3px 0 3px;
  display: flex;
  flex-direction: column;
  background: #e6e6e6;
}
.sb-btn {
  width: 15px;
  height: 15px;
  flex: none;
  box-sizing: border-box;
  background: #fff;
  border: 1px solid #9b9b9b;
  display: flex;
  align-items: center;
  justify-content: center;
}
.sb-track {
  height: 443px;
  background: #e6e6e6;
  flex: none;
}
.sb-thumb {
  height: 426px;
  background: #fff;
  border: 1px solid #9b9b9b;
  border-top: none;
  box-sizing: border-box;
}
.tri {
  width: 0;
  height: 0;
  display: block;
}
.tri.up { border: 4px solid transparent; border-bottom: 4px solid #222; border-top: 0; }
.tri.down { border: 4px solid transparent; border-top: 4px solid #222; border-bottom: 0; }
.tri.lft { border: 4px solid transparent; border-right: 4px solid #222; border-left: 0; }
.tri.rgt { border: 4px solid transparent; border-left: 4px solid #222; border-right: 0; }

/* sheet tabs */
.tabs-bar {
  height: 27px;
  flex: none;
  display: flex;
  align-items: center;
  background: #e6e6e6;
  border-bottom: 1px solid #c6c6c6;
  box-sizing: content-box;
}
.nav-tri {
  width: 0;
  height: 0;
  border: 4px solid transparent;
  flex: none;
}
.nav-tri.left { border-left: 0; border-right: 4px solid #c0c0c0; margin-left: 27px; }
.nav-tri.right { border-right: 0; border-left: 4px solid #c0c0c0; margin-left: 25px; }
.sheet-tab {
  margin-left: 40px;
  width: 65px;
  height: 24px;
  align-self: flex-start;
  box-sizing: border-box;
  background: #fff;
  border: 1px solid #9b9b9b;
  border-top: none;
  border-bottom: 2px solid #217346;
  color: #217346;
  font-family: Lato, sans-serif;
  font-weight: 700;
  font-size: 13.5px;
  line-height: 24px;
  text-align: center;
}
.add { margin-left: 33px; flex: none; }
.tabs-dots { margin-left: 600px; width: 10px; }
.hscroll {
  display: flex;
  align-items: center;
  margin-left: 12px;
}
.sb-btn.h { width: 15px; }
.h-thumb {
  width: 455px;
  height: 15px;
  box-sizing: border-box;
  background: #fff;
  border: 1px solid #9b9b9b;
  border-left: none;
}
.h-rest { width: 25px; }

/* status bar */
.status {
  height: 22px;
  flex: none;
  background: #f3f3f3;
  display: flex;
  align-items: center;
  font-size: 11px;
  color: #444;
}
.ready { margin-left: 7px; width: 50px; }
.acc { flex: none; }
.acc-text { margin-left: 1px; width: 991px; white-space: nowrap; font-size: 11.3px; }
.view-btn {
  width: 40px;
  height: 22px;
  display: flex;
  align-items: center;
  justify-content: center;
  flex: none;
}
.view-btn.on { background: #c4c4c4; }
.zm {
  width: 7px;
  height: 1px;
  background: #444;
  flex: none;
  position: relative;
}
.minus { margin-left: 9px; }
.plus { margin-left: 4px; }
.plus::after {
  content: "";
  position: absolute;
  left: 3px;
  top: -3px;
  width: 1px;
  height: 7px;
  background: #444;
}
.slider {
  width: 100px;
  height: 1px;
  background: #444;
  margin-left: 3px;
  display: flex;
  align-items: center;
  justify-content: center;
  flex: none;
}
.slider i {
  width: 5px;
  height: 11px;
  background: #444;
  flex: none;
}
.zoom-val { margin-left: 13px; }

/* taskbar */
.taskbar {
  height: 40px;
  flex: none;
  background: #eddad2;
  display: flex;
  align-items: center;
  position: relative;
}
.start { margin-left: 16px; flex: none; }
.search {
  margin-left: 17px;
  width: 287px;
  height: 39px;
  margin-top: 1px;
  box-sizing: border-box;
  background: #fff;
  border: 1px solid #d8d8d8;
  display: flex;
  align-items: center;
  padding: 0 0 2px 12px;
  font-size: 14px;
  color: #333;
  position: relative;
  flex: none;
}
.search span { margin-left: 9px; }
.whale {
  position: absolute;
  right: 0;
  bottom: 0;
}
.tv { margin-left: 17px; flex: none; }
.tb { flex: none; }
.edge { margin-left: 30px; }
.folder { margin-left: 25px; }
.mail { margin-left: 24px; }
.drop { margin-left: 24px; }
.orange { margin-left: 25px; }
.chrome { margin-left: 26px; }
.tb-active {
  margin-left: 13px;
  width: 48px;
  height: 40px;
  box-sizing: border-box;
  background: #f6eee9;
  border-bottom: 2px solid #f0631c;
  display: flex;
  align-items: center;
  justify-content: center;
  flex: none;
}
.help { margin-left: 148px; flex: none; }
.sun { margin-left: 88px; flex: none; }
.weather {
  margin-left: 11px;
  width: 81px;
  font-size: 13px;
  color: #222;
  white-space: nowrap;
}
.tray { flex: none; }
.t-car { margin-left: 8px; }
.t-meet { margin-left: 12px; }
.t-cloud { margin-left: 8px; }
.t-bat { margin-left: 8px; }
.t-wifi { margin-left: 10px; }
.t-vol { margin-left: 7px; }
.clock {
  width: 66px;
  margin-left: 1px;
  display: flex;
  flex-direction: column;
  align-items: center;
  font-size: 11px;
  line-height: 17px;
  color: #222;
  flex: none;
}
.notif {
  margin-left: 11px;
  position: relative;
  width: 16px;
  height: 15px;
  flex: none;
}
.badge {
  position: absolute;
  left: 8px;
  top: 9px;
  width: 15px;
  height: 15px;
  border-radius: 50%;
  background: #c9bdb7;
  border: 1px solid #777;
  box-sizing: border-box;
  font-size: 10px;
  line-height: 13px;
  text-align: center;
  color: #222;
}
.desk-edge {
  position: absolute;
  right: 3px;
  top: 0;
  bottom: 0;
  width: 1px;
  background: #b8aaa3;
}
.ic-x { font: 700 10px "Open Sans", sans-serif; fill: #fff; }
.ic-q { font: 700 15px "Open Sans", sans-serif; fill: #fff; }
</style>

<style>
html, body { margin: 0; padding: 0; overflow: hidden; }
</style>
